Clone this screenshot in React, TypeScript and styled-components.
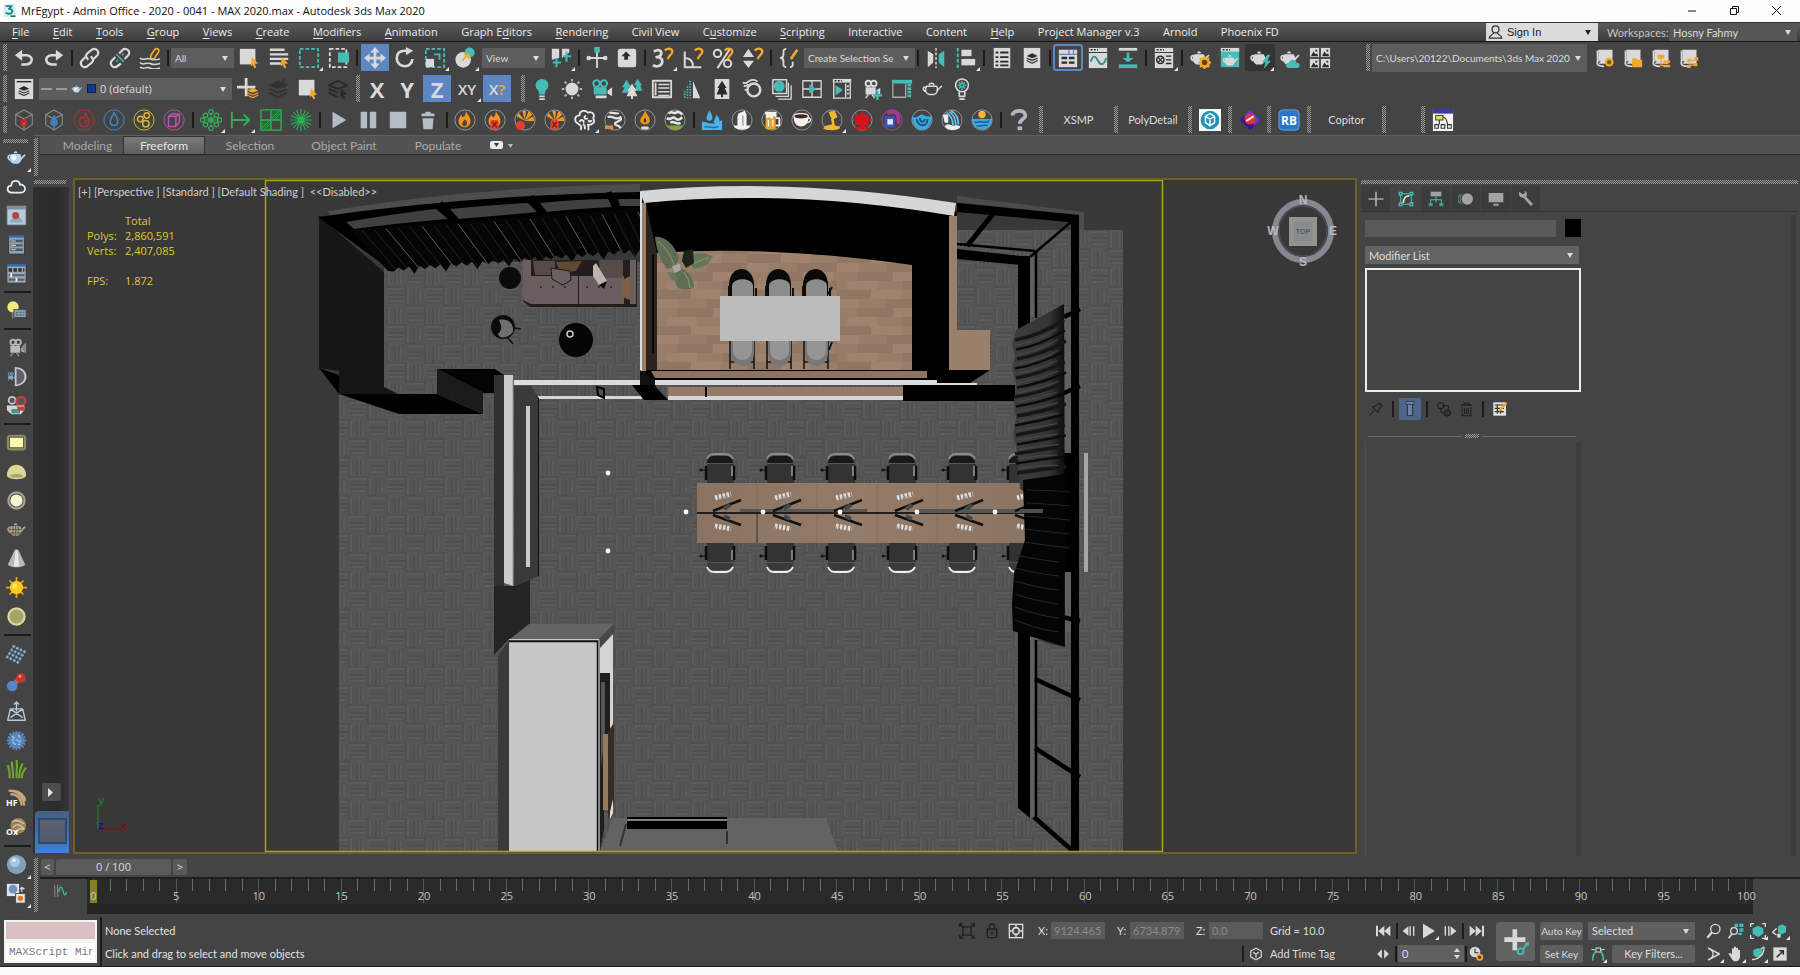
import React from "react";
import styled, { createGlobalStyle, css } from "styled-components";

const W = "#d9d9d9";
const T = "#45bdb6";
const Y = "#f2a92b";
const D = "#2b2b2b";
const UI = 'Lato, "Open Sans", sans-serif';

const Global = createGlobalStyle`
  *, *::before, *::after { box-sizing: border-box; }
  html, body, #root { height: 100%; }
  body { margin: 0; background: #444444; overflow: hidden; }
  body, button, input, select {
    font-family: "Open Sans", "Noto Sans", sans-serif;
    font-size: 11px;
    color: #dcdcdc;
  }
  button { border: 0; padding: 0; background: none; }
`;

/* ---------- drawing helpers ---------- */

const F = ({ d, c = W }: { d: string; c?: string }) => <path d={d} fill={c} />;
const S = ({ d, c = W, w = 2, dash }: { d: string; c?: string; w?: number; dash?: string }) => (
  <path d={d} fill="none" stroke={c} strokeWidth={w} strokeDasharray={dash} strokeLinejoin="round" />
);
const C = ({ x, y, r, c = W, s, w = 1 }: { x: number; y: number; r: number; c?: string; s?: string; w?: number }) => (
  <circle cx={x} cy={y} r={r} fill={c} stroke={s} strokeWidth={w} />
);
const Ring = ({ c = "#9a9a9a" }: { c?: string }) => <C x={12} y={12} r={11} c="none" s={c} w={1} />;

const cursor = <F d="M15 11l7 7-4 .3 2 4-2 1-2-4-2 2z" c={Y} />;
const magnet = <S d="M14 4c3-4 9-2 8 2-.5 2-3 3-5 7" c={Y} w={2.4} />;
const layers = (c: string) => (
  <>
    <F d="M2 8l10-5 10 5-10 4z" c={c} />
    <S d="M2 12l10 4 10-4M2 16l10 5 10-5" c={c} w={2} />
  </>
);
const teapot = (c: string) => (
  <>
    <F d="M6 8h10c3 4 2 9-2 11H8c-4-2-5-7-2-11zM9 7c0-3 4-3 4 0z" c={c} />
    <S d="M6 10c-4-2-5 3-1 5M16 15c2-1 3-5 6-6" c={c} w={2} />
  </>
);
const flame = (a: string, b: string) => (
  <>
    <F d="M13 2c1 4 5 6 5 11 0 4-3 7-6 7s-7-2-7-7c0-3 2-5 3-7 1 2 1 3 2 3 2-1 3-4 3-7z" c={a} />
    <F d="M12 11c1 2 3 3 2 6-1 3-5 2-5-1 0-2 2-3 3-5z" c={b} />
  </>
);
const burst = (
  <F d="M12 13L9 2h4zM12 13l4-11 4 4zM12 13l9-5 1 5zM12 13L3 8l2-4z" c="#f39a1e" />
);
const redX = (
  <>
    <rect x="7" y="12" width="9" height="10" rx="2" fill="#e2402e" />
    <S d="M9 14l5 6M14 14l-5 6" c="#7e1c12" w={1.4} />
  </>
);
const cube = (c: string) => <S d="M12 1l9 5v11l-9 6-9-6V6zM3 6l9 5 9-5M12 11v12" c={c} w={1.2} />;
const movie = (a: string, b: string) => (
  <>
    <C x={8} y={6} r={3} c="none" s={a} w={2} />
    <C x={14} y={6} r={3} c="none" s={a} w={2} />
    <F d="M5 10h11v8H5zM17 13l4-2v7l-4-2z" c={a} />
    <S d="M8 18l-3 4M12 18l3 4" c={b} w={1.5} />
  </>
);
const page = (inner: React.ReactNode) => (
  <>
    <rect x="3" y="1" width="18" height="22" fill={W} />
    {inner}
  </>
);
const winTop = (
  <>
    <rect x="2" y="1" width="20" height="4" fill={W} />
    <S d="M4 3h8" c={D} w={1.6} dash="2 1.5" />
  </>
);

const icons: Record<string, React.ReactNode> = {
  undo: (<><S d="M6 9h9c8 1 7 10-2 10H9" w={2.8} /><F d="M2 9l8-6v12z" /></>),
  redo: (<><S d="M18 9H9c-8 1-7 10 2 10h4" w={2.8} /><F d="M22 9l-8-6v12z" /></>),
  link: (<><S d="M10 14l-2-3c-1-2 0-3 1-4l5-4c4-3 9 2 6 6l-4 4" w={2.4} /><S d="M13 10l2 3c1 2 0 3-1 4l-5 4c-4 3-9-2-6-6l4-4" w={2.4} /></>),
  unlink: (<><S d="M11 7l4-4c4-3 9 2 6 6l-4 4M13 18l-4 3c-4 3-9-2-6-6l4-4" w={2.4} /><S d="M8 8l8 8M8 16l2-2M14 9l2-2" c={T} w={1.6} /></>),
  bind: (<><S d="M1 12c4 4 7-1 11 1s7 1 11 0M1 17c4 4 7-1 11 1s7 1 11 0M1 22c4 3 7-1 11 1s7 1 11 0" w={1.6} /><S d="M13 9l4-6c3-3 6 0 4 3l-4 6c-2 2-5 0-4-3z" c={Y} w={1.8} /></>),
  pick: (<><rect x="2" y="2" width="17" height="17" fill={W} />{cursor}</>),
  byName: (<><S d="M2 3h16M2 8h20M2 13h20M2 18h12" w={2.6} />{cursor}</>),
  region: <S d="M2 2h20v20H2z" c={T} w={2} dash="4 2.2" />,
  crossing: (<><S d="M2 2h18v20H2z" w={2} dash="4 2.2" /><rect x="11" y="6" width="12" height="11" fill={T} /></>),
  move: (<><S d="M12 3v18M3 12h18" w={3} /><F d="M12 0l5 6H7zM12 24l-5-6h10zM0 12l6-5v10zM24 12l-6-5v10z" /></>),
  rotate: (<><S d="M20 13c0 5-4 8-8 8s-9-3-9-9 4-8 9-8h2" w={2.8} /><F d="M13 0l8 4-8 5z" /></>),
  scale: (<><S d="M2 2h20v20H2z" c={T} w={2} dash="4 2.2" /><rect x="2" y="13" width="9" height="9" fill={W} /><S d="M11 8h6v6" c={T} w={2} /></>),
  place: (<><C x={10} y={14} r={8.5} /><C x={17} y={6} r={5.5} c={T} /><S d="M9 15l7-8M11 8h5v5" c={Y} w={2} /></>),
  pivot: (<><F d="M2 2h8v10l-8 2zM13 2h8v4l-8 6z" /><S d="M7 12v10M3 17h9M18 5v11M14 10h9" c={T} w={2.2} /></>),
  manip: (<><S d="M12 3v20M2 12h20" w={2} /><rect x="9" y="0" width="6" height="6" fill={T} /><C x={3} y={12} r={2.5} /><C x={21} y={12} r={2.5} /></>),
  keyb: (<><rect x="2" y="2" width="20" height="20" rx="2.5" fill={W} /><F d="M11 5l5 5h-3v4H9v-4H6z" c={D} /></>),
  snap3: (<><S d="M2 5c5-3 9-1 8 3-1 2-3 3-5 3 4 0 7 2 6 6-1 4-6 5-10 3" w={3} />{magnet}</>),
  angle: (<><S d="M3 5v17h18M3 12c6 0 9 4 9 10" w={2.2} />{magnet}</>),
  percent: (<><C x={6} y={7} r={4} c="none" s={W} w={2.2} /><C x={17} y={18} r={4} c="none" s={W} w={2.2} /><S d="M19 3L6 23" w={2.2} />{magnet}</>),
  spinner: (<><F d="M7 2l6 9H1zM7 23l-6-8h12z" />{magnet}</>),
  named: (<><S d="M9 2c-4 0-3 4-3 6s-1 4-3 4c2 0 3 2 3 4s-1 6 3 6M13 22c4 0 3-4 3-6" w={2} /><S d="M14 13l7-10" c={Y} w={3} /></>),
  mirror: (<><F d="M3 4l6 4v9l-6 5z" /><S d="M12 1v22" dash="3 2" w={1.6} /><F d="M21 4l-6 4v9l6 5z" c={T} /></>),
  align: (<><S d="M3 1v22" c={T} w={2} dash="4 2" /><rect x="7" y="3" width="11" height="7" fill={W} /><rect x="7" y="13" width="15" height="7" fill={W} /></>),
  sheet: page(<S d="M5 6h3M10 6h9M5 11h3M10 11h9M5 16h3M10 16h9M5 20h3M10 20h9" c={D} w={2} />),
  layerSheet: page(<g transform="translate(5 5) scale(.6)">{layers(D)}</g>),
  ribbon: (<><rect x="2" y="3" width="20" height="19" fill={W} /><S d="M13 3v5M18 3v4M2 8h20" c="#5b84c4" w={1.4} /><S d="M5 12h6M13 12h6M5 17h6M13 17h6" c={D} w={2.6} /></>),
  curve: (<><rect x="2" y="1" width="20" height="22" fill={W} /><S d="M2 6h20" c={D} w={1} /><S d="M4 3h8" c={D} w={1.6} dash="2 1.5" /><S d="M4 16c3-9 6-5 8-1s6 7 9-3" c="#2b8f8a" w={2} /></>),
  schematic: (<><rect x="2" y="1" width="20" height="3" fill={W} /><S d="M12 6v8" c={T} w={3} /><F d="M6 12h12l-6 5z" c={T} /><rect x="2" y="19" width="20" height="4" fill={T} /></>),
  material: (<><rect x="2" y="1" width="20" height="22" fill={W} /><S d="M2 6h20" c={D} w={1} /><S d="M4 3h8" c={D} w={1.6} dash="2 1.5" /><C x={8} y={14} r={4} c="none" s={D} w={1.6} /><S d="M5 11l6 6M11 11l-6 6M14 10h6M14 14h6M14 18h6" c={D} w={1.4} /></>),
  renderSetup: (<>{teapot(W)}<C x={17} y={17} r={4.5} c="#5b4310" s={Y} w={3} /><S d="M17 10v3M17 21v3M10 17h3M21 17h3M12 12l2 2M20 20l2 2M22 12l-2 2M14 20l-2 2" c={Y} w={2} /></>),
  frameWin: (<><rect x="2" y="2" width="20" height="20" fill={T} />{winTop}<g transform="translate(3 5) scale(.8)">{teapot(W)}</g></>),
  renderProd: (<>{teapot(W)}<F d="M20 9l-6 8h4l-2 7 8-9h-4l3-6z" c={T} /></>),
  renderCloud: (<>{teapot(W)}<F d="M10 23c-4-1-2-6 1-6 1-4 7-4 8 0 4 0 5 6 1 6z" c={T} /></>),
  gallery: (<>{[1, 13].map((x) => [1, 13].map((y) => <g key={`${x}-${y}`}><rect x={x} y={y} width="10" height="10" fill={W} /><F d={`M${x + 1} ${y + 9}l3-5 2 3 2-1 1 3z`} c={D} /><rect x={x + 6} y={y + 2} width="2" height="2" fill={D} /></g>))}</>),
  projGear: (<><F d="M4 2h17v17H4l3-3H4z" /><S d="M3 3v14c-2 4 4 5 8 5" w={2} /><C x={17} y={17} r={4} c="#7a5a10" s={Y} w={2.6} /></>),
  projFolder: (<><F d="M4 2h17v17H4l3-3H4z" /><S d="M3 3v14c-2 4 4 5 8 5" w={2} /><F d="M11 12h5l1 2h6v9H11z" c={Y} /></>),
  projTree: (<><F d="M4 2h17v17H4l3-3H4z" /><S d="M3 3v14c-2 4 4 5 8 5" w={2} /><F d="M8 8h8v5H8zM15 15h8v3h-8zM15 20h8v3h-8z" c={Y} /><S d="M12 12v9h4" c={Y} w={1.6} /></>),
  projNet: (<><F d="M4 2h17v17H4l3-3H4z" /><S d="M3 3v14c-2 4 4 5 8 5" w={2} /><F d="M10 13h4v4h-4zM18 11h5v4h-5zM10 20h4v4h-4zM18 18h4v4h-4z" c={Y} /><S d="M12 15h8M12 21l8-1" c={Y} w={1.6} /></>),

  explorer: (<><rect x="2" y="1" width="20" height="22" fill={W} /><S d="M4 4h16" c={D} w={1.6} /><g transform="translate(5 7) scale(.58)">{layers(D)}</g></>),
  layerAdd: (<><S d="M10 0v20M0 10h20" w={3} /><g transform="translate(10 9) scale(.6)">{layers(Y)}</g></>),
  layerIn: (<g opacity=".7"><>{layers(D)}</><S d="M18 1v8M14 6l4 4 4-4" c={D} w={2} /></g>),
  layerPick: (<g opacity=".7"><S d="M2 8l10-5 10 5-10 4zM2 12l10 4M2 16l10 5" c="#1d1d1d" w={2} /><F d="M15 11l7 7-4 .3 2 4-2 1-2-4-2 2z" c="#1d1d1d" /></g>),
  bulb: (<><C x={12} y={8} r={7} c={T} /><F d="M8 13h8l-1 5H9z" c={T} /><S d="M9 20h6M9 23h6" w={1.8} /></>),
  sunL: (<><S d="M12 1v22M1 12h22M4 4l16 16M20 4L4 20" w={2} c="#bdbdbd" /><C x={12} y={12} r={8.5} c="#444" /><C x={12} y={12} r={7} /></>),
  camL: (<><C x={6} y={6} r={3.5} c="none" s={T} w={2.2} /><C x={14} y={6} r={3.5} c="none" s={T} w={2.2} /><F d="M3 10h14v8H3z" c={T} /><F d="M18 14l5-4v10l-5-3zM5 19h12v3H5z" /></>),
  trees: (<><F d="M6 2l5 8H8l3 6H1l3-6H1zM18 1l5 7h-2l2 6h-8l2-6h-3z" c={T} /><F d="M12 6l5 8h-2l3 6h-5v3h-2v-3H6l3-6H7z" /></>),
  list: (<><S d="M2 3h20v18H2z" w={2} /><S d="M5 5v14" w={2} c={W} /><S d="M8 7h12M8 11h12M8 15h12M8 19h12" w={1.6} /></>),
  halfTree: (<><F d="M13 3l8 19h-8z" /><S d="M10 3v19M7 9v13M4 14v8" c={T} w={1.8} dash="1.6 1.4" /></>),
  treePage: (<><rect x="4" y="1" width="16" height="22" rx="1" fill={W} /><F d="M12 3l5 8h-2l3 7h-5v3h-2v-3H6l3-7H7z" c={D} /></>),
  donut: (<><C x={14} y={13} r={7} c="none" s={W} w={2.6} /><S d="M2 5c2 1 4 1 6-1 2-2 7-3 10 0M3 9c2 0 3 0 5-2M4 13h4" w={2} /></>),
  sphereStack: (<><S d="M2 2h15v15H2z" w={1.6} /><S d="M19 5v15H5M22 8v15H8" w={1.4} /><C x={9} y={9} r={6} c={T} /></>),
  gridPlay: (<><S d="M2 3h20v18H2zM12 3v18M2 12h20" w={1.4} /><F d="M9 7l8 5-8 5z" c={T} /></>),
  winPlay: (<>{winTop}<S d="M3 5v17h18V5M16 6v15" w={1.5} /><F d="M5 8l8 5-8 6z" c={T} /><S d="M18.5 8v12" w={2} dash="2 2" /></>),
  camAdd: (<>{movie(W, W)}<S d="M18 14v10M13 19h10" c={T} w={2.4} /></>),
  winTeal: (<><rect x="1" y="2" width="22" height="4" fill={T} /><S d="M2 6v15h14V6" c="#a9a9a9" w={1.4} /><S d="M20 6v16" c={T} w={4} dash="3 1" /></>),
  potLine: (<><S d="M6 9h11c2 4 1 8-3 9H9c-4-1-5-5-3-9zM9 8c0-3 5-3 5 0" w={1.6} /><S d="M6 10c-4-1-5 3-1 5M17 14c2-1 3-4 6-5" w={1.6} /></>),
  bulbGear: (<><C x={12} y={8} r={7} c="none" s={W} w={1.6} /><S d="M12 3v10M7 8h10M8.500 4.500l7 7M15.500 4.500l-7 7" c={T} w={1.5} /><C x={12} y={8} r={2} c="#444" s={T} w={1.5} /><S d="M9 15v5h6v-5M9 23h6" w={1.8} /></>),

  cubeFire: (<>{cube("#8d8d8d")}<g transform="translate(5 7) scale(.6)">{flame("#b5302b", "#d2473c")}</g></>),
  cubeDrop: (<>{cube("#8d8d8d")}<F d="M12 6c3 5 5 7 4 10s-7 4-8 0c-1-3 2-5 4-10z" c="#3f7fc0" /></>),
  ringFire: (<><Ring c="#b5302b" /><g transform="translate(3 3) scale(.8)"><S d="M13 2c1 4 5 6 5 11 0 4-3 8-6 8s-7-3-7-8c0-3 2-5 3-7 1 2 1 3 2 3 2-1 3-4 3-7zM12 11c1 2 3 3 2 6" c="#b5302b" w={1.8} /></g></>),
  ringDrop: (<><Ring c="#3f87cf" /><S d="M12 4c3 5 5 7 4 11s-7 4-8 0c-1-4 2-6 4-11z" c="#3f87cf" w={1.6} /></>),
  ringBubbles: (<><Ring c="#d8b73a" /><C x={15} y={7} r={3} c="none" s="#d8b73a" w={1.6} /><C x={8} y={11} r={3} c="none" s="#d8b73a" w={1.6} /><C x={14} y={16} r={3.5} c="none" s="#d8b73a" w={1.6} /></>),
  ringCube: (<><Ring c="#c052b4" /><S d="M6 8l5-3 7 1v8l-4 5H6zM6 8h8v10M14 8l4-2" c="#c052b4" w={1.6} /></>),
  gNet: (<>{[[12, 3], [6, 7], [18, 7], [2.5, 12], [12, 12], [21.5, 12], [6, 17], [18, 17], [12, 21]].map(([x, y]) => <C key={`${x}${y}`} x={x} y={y} r={2.4} c="none" s="#2fb257" w={1.3} />)}<S d="M12 5v14M4 12h16M7 8l10 8M17 8L7 16" c="#2fb257" w={1} /></>),
  gArrow: <S d="M2 3v18M2 12h18M15 6l6 6-6 6" c="#2fb257" w={2} />,
  gChecker: (<><F d="M12 1h11v11H12zM1 12h11v11H1z" c="#1f7038" /><S d="M13 10l8-8M16 11l6-6M2 21l8-8M5 22l6-6" c="#2fb257" w={1} /><S d="M1 1h22v22H1zM12 1v22M1 12h22" c="#2fb257" w={1.4} /></>),
  gBurst: <S d="M12 0v24M0 12h24M3.500 3.500l17 17M20.500 3.500l-17 17M7 1l10 22M17 1L7 23M1 7l22 10M1 17L23 7" c="#2fb257" w={1.2} />,
  play: <F d="M6 3l15 9-15 9z" c="#b4bcc6" />,
  pause: <F d="M4 3h7v18H4zM14 3h7v18h-7z" c="#b4bcc6" />,
  stop: <rect x="3" y="3" width="18" height="18" fill="#b4bcc6" />,
  trash: <F d="M5 5h4V3h6v2h4v3H5zM6 10h12l-1 12H7z" c="#b4bcc6" />,
  fire: (<><Ring />{flame("#f6921e", "#494949")}</>),
  fireX: (<><Ring />{flame("#f6921e", "#e8a040")}{redX}</>),
  blast: (<><Ring />{burst}<C x={7} y={18} r={5} c="#e2402e" /></>),
  blastX: (<><Ring />{burst}{redX}</>),
  smoke: (<S d="M7 23c3-5-2-6-5-9-2-5 1-7 4-7 0-6 7-6 9-3 5-2 8 2 6 6 3 5-2 8-6 7 1 3 2 5 0 6M6 14c2-4 6-1 4 1M13 7c-3 2-1 5 2 3M16 12c0 3 3 2 3 0M12 22c0-3 0-4-2-6" c="#e9e9e9" w={2} />),
  cigar: (<><Ring /><S d="M6 5c3-3 7 2 10-1M4 9c5-3 8 4 14 0 3 5-6 4-6 7s5 1 6 5" c="#e6e6e6" w={2.4} /><rect x="1" y="18" width="9" height="4" fill="#d68d4c" /></>),
  candle: (<><Ring /><F d="M12 2c3 5 6 8 5 12s-9 4-10 0c-1-4 3-6 5-12z" c="#f6921e" /><F d="M12 9c2 3 2 5 0 6-2-1-2-3 0-6z" c="#3c3c3c" /><rect x="8" y="19" width="8" height="3" rx="1" fill="#ddd" /></>),
  swamp: (<><Ring /><S d="M5 5c4-4 5 1 8-1s5 0 7 2M3 10c5 3 6-3 9 0s5 2 8-1M7 15c4-3 6 3 11 0" c="#e6e6e6" w={2.8} /><F d="M3 18h18c-3 7-15 7-18 0z" c="#7ba63b" /></>),
  splash: (<><F d="M9 1c3 5 4 7 3 10s-6 2-6-1 2-5 3-9zM17 6c2 3 4 5 3 8s-6 2-6 0 2-4 3-8z" c="#49b3ee" /><F d="M1 14c6-1 9 6 22-2v11H1z" c="#49b3ee" /><S d="M4 20c5-3 8 3 15-1" c="#1b6ea5" w={1.6} /></>),
  milk: (<><Ring /><F d="M8 5l7-3 2 4v13H7V9z" c="#f1f1f1" /><F d="M3 18h18c0 6-18 6-18 0z" c="#f1f1f1" /><S d="M13 7v11" c="#8a8a8a" w={1.2} /></>),
  beer: (<><Ring /><rect x="5" y="8" width="11" height="14" fill="#e9a32a" /><F d="M4 3h13v6l-3-1-2 3-3-2-3 1z" c="#f4f1e6" /><S d="M16 10h4v8h-4" c="#efefef" w={2} /><S d="M8 12v7M13 12v7" c="#fff" w={1.2} /></>),
  coffee: (<><Ring /><F d="M3 9h16c0 6-3 10-8 10S3 15 3 9z" c="#f2f2f2" /><ellipse cx="11" cy="8" rx="8" ry="3" fill="#4b241c" stroke="#f2f2f2" strokeWidth="1.4" /><S d="M18 10c5-1 4 5-2 5" c="#f2f2f2" w={1.6} /></>),
  honey: (<><Ring /><F d="M8 3l7-1 3 7-6 3z" c="#f1b434" /><F d="M11 11h3l1 7c9 1 7 5-3 5S0 21 6 18l6-1z" c="#f1b434" /></>),
  splat: (<><Ring /><F d="M12 2l2 5 5-3-1 5 5 3-5 2 2 5-5-1v4h-6l1-5-6 1 2-4-5-3 5-1-2-6 6 3z" c="#d4141a" /><S d="M5 21h14" c="#d4141a" w={3} /></>),
  paint: (<><Ring c="#b0479b" /><S d="M7 5c6-4 12-1 12 5v6" c="#a83792" w={4} /><rect x="4" y="8" width="11" height="12" rx="1" fill="#3b55c4" /><F d="M7 11h6v6H7z" c="#e4e9f7" /></>),
  whirl: (<><Ring /><F d="M1 8c6 4 8-3 11-2s6 4 11 1c0 20-21 22-22 1z" c="#3aa9e0" /><S d="M6 11c2 9 12 9 12 0M10 10c-1 5 5 5 5 1" c="#12517c" w={2} /></>),
  falls: (<><Ring /><S d="M9 3c5 3 7 8 7 15M6 4c5 3 7 8 7 14M11 2c6 3 8 9 8 15" c="#6cc4ee" w={1.8} /><F d="M4 19c2-4 6-2 8-1s7-2 9 2c-3 4-14 4-17-1zM2 6h6v9H4z" c="#eeeeee" /></>),
  ocean: (<><Ring /><C x={12} y={6} r={4} c="#f1b434" /><F d="M1 11h22c0 15-22 15-22 0z" c="#3aa9e0" /><S d="M4 14c3 2 5-1 8 0s5 1 8-1M6 18c3 2 6-1 12 0" c="#155f90" w={1.6} /></>),
  help: (<><S d="M5 7c0-6 14-7 14 0 0 4-6 4-6 9" c="#b3b7c4" w={4.2} /><rect x="10.500" y="19" width="5" height="4" fill="#b3b7c4" /></>),
  xsCube: (<><rect x="0" y="0" width="24" height="24" fill="#f3f9fb" /><C x={12} y={12} r={8.5} c="#2295b4" s="#2295b4" w={3.4} /><S d="M12 12v7M7 8l5 3 5-3M7 8v7l5 3 5-3V8l-5-3z" c="#f3f9fb" w={1.6} /></>),
  diamond: (<><F d="M12 1l11 11-11 11L1 12z" c="#3a1694" /><F d="M12 1l11 11-6 6L6 7z" c="#6b35d8" /><C x={12} y={11} r={6} c="#e03535" /><S d="M8 13l8-5" c="#fff" w={2} /></>),
  rb: (<><rect x="1" y="1" width="22" height="22" rx="4" fill="#2a74c9" stroke="#68a7e8" /><text x="12" y="17" textAnchor="middle" fontSize="13" fontWeight="700" fill="#fff" fontFamily="Open Sans, sans-serif">RB</text></>),
  flow: (<><rect x="1" y="0" width="22" height="24" fill="#f3f3f3" /><rect x="1" y="0" width="22" height="5" fill="#3c3aa0" /><rect x="4" y="7" width="8" height="5" fill="#ecd94a" stroke="#333" /><S d="M8 12v5M12 9c4 0 4 4 5 8M3 17h4v4H3zM10 17h4v4h-4zM17 17h4v4h-4z" c="#333" w={1.2} /></>),

  potBlue: (<g>{teapot("#b9d2ea")}<C x={9} y={12} r={3} c="#eef6fd" /></g>),
  cloud: <S d="M6 19c-6-1-5-8 0-8 0-7 9-7 10-1 7-1 8 9 1 9z" c="#e3edf5" w={2} />,
  vfb: (<><rect x="1" y="1" width="22" height="22" fill="#b3cbe0" stroke="#555" /><rect x="1" y="1" width="22" height="4" fill="#8a8a90" /><F d="M4 20l4-6h8l4 6z" c="#8fa9bf" /><C x={11} y={12} r={4} c="#b1463c" /></>),
  uiList: (<><rect x="3" y="1" width="18" height="22" fill="#8fa0b0" stroke="#333" /><rect x="3" y="1" width="18" height="3" fill="#3567a5" /><S d="M5 8h14M5 13h14M5 18h14" c="#4c5864" w={2.6} /><S d="M6 8h5M6 13h5M6 18h5" c="#cfd8e0" w={1.4} /></>),
  uiGrid: (<><rect x="1" y="1" width="22" height="22" fill="#9aa7b3" stroke="#333" /><rect x="1" y="1" width="22" height="3" fill="#3567a5" /><S d="M3 8h18" c="#333" w={4} dash="4 1.500" /><S d="M3 14h18M3 19h18" c="#58626c" w={2.4} /><S d="M6 12v4M12 17v4" c="#fff" w={2} /></>),
  lamp: (<><C x={8} y={8} r={6.5} c="#f5ea79" /><F d="M6 14h5l-1 7H7z" c="#777" /><rect x="9" y="11" width="14" height="9" fill="#8ba3b8" stroke="#444" /><S d="M11 14h10M11 17h10" c="#4b6076" w={1.4} dash="3 1" /></>),
  movie1: (<>{movie("#bdb9bb", "#8f8b8d")}<F d="M23 6v13l-5-5v-3z" c="#8a8a8a" /></>),
  dome: (<><F d="M10 1c18 0 18 22 0 22z" c="#c4c8cc" /><F d="M12 3c12 1 12 17 0 18z" c="#5e6266" /><g transform="translate(0 6) scale(.5)">{movie("#7fa7cc", "#7fa7cc")}</g></>),
  movieRed: (<><C x={7} y={6} r={4} c="#555" s="#ccc" w={2} /><C x={17} y={7} r={5} c="#555" s="#c63f45" w={2.4} /><F d="M1 12h20v5l-4 5H6l-5-5z" c="#d8d4d4" /><F d="M6 16h10v5H6z" c="#3c9b96" /><F d="M12 13h9v5h-7z" c="#c63f45" /></>),
  lRect: (<><rect x="1" y="3" width="22" height="18" rx="4" fill="#8c8967" /><rect x="4" y="6" width="16" height="12" fill="#fdf6ae" stroke="#55522f" /></>),
  lDome: (<><F d="M1 17c0-17 22-17 22 0-4 5-18 5-22 0z" c="#dcd794" /><F d="M4 17c3-3 13-3 16 0-4 3-12 3-16 0z" c="#aba768" /></>),
  lSphere: (<><C x={12} y={12} r={10.5} c="#a6a491" /><C x={12} y={12} r={8} c="#4b4b45" /><C x={12} y={12} r={7} c="#f6f3cf" /></>),
  lMesh: (<>{teapot("#a8a384")}<S d="M8 8v11M11 8v12M14 8v11M4 12h14M5 16h12" c="#5b583f" w={1} /></>),
  lCone: (<><F d="M10 2h4l8 17c-5 4-15 4-20 0z" c="#b8b8b8" /><F d="M11 2h2l2 19H9z" c="#e8e8e8" /></>),
  sun: (<><S d="M12 0v24M0 12h24M4 4l16 16M20 4L4 20" c="#e6a913" w={2} /><C x={12} y={12} r={7.5} c="#fbc91c" /><C x={10} y={10} r={3} c="#fde465" /></>),
  disc: (<><C x={12} y={12} r={10.5} c="#dcd89d" /><C x={12} y={12} r={8} c="#a8a36a" /></>),
  dots: (<>{[0, 1, 2, 3].map((i) => [0, 1, 2, 3].map((j) => <C key={`${i}${j}`} x={9 + i * 4 - j * 2.5} y={4 + i * 2 + j * 4} r={1.9} c="#8fb0cc" s="#394a58" w={0.6} />))}</>),
  balls: (<><S d="M8 15l8-8" c="#b06a80" w={5} /><C x={7} y={16} r={6} c="#5288c8" /><C x={17} y={7} r={5.5} c="#c8372f" /><C x={16} y={5} r={1.5} c="#ee9a92" /></>),
  pyramid: (<S d="M12 1v11M9 4l3-3 3 3M5 9l-3 13h20L19 9zM5 9l14 10M19 9L5 19" c="#b3cbdc" w={1.6} />),
  furball: (<><S d="M12 1v22M1 12h22M4 4l16 16M20 4L4 20M8 2l8 20M16 2L8 22M2 8l20 8M2 16l20-8" c="#5a87bd" w={2.4} /><C x={12} y={12} r={8.5} c="#5a87bd" /><S d="M7 7l3 3M14 6l2 3M17 12l-3 2M8 14l3 3M12 11l2 1M7 11l2 1M14 17l2-1" c="#a3c3e6" w={1.6} /></>),
  grass: <S d="M4 22C5 15 3 10 2 7M8 22C9 14 6 8 7 3M12 22C12 12 13 6 12 1M15 22c0-8 2-13 4-17M18 22c0-5 2-9 5-12" c="#6ea82c" w={2.4} />,
  hair: (<><S d="M3 3c9 0 16 5 18 17M5 7c7 0 12 4 13 13M8 3c7 1 13 5 14 12" c="#c7a77b" w={2.4} /><text x="0" y="21" fontSize="10" fontWeight="700" fill="#fff" fontFamily="Open Sans, sans-serif">HF</text></>),
  ox: (<><C x={14} y={10} r={9} c="#9c8260" /><S d="M7 6c5-5 11 0 14 2M8 12c4-6 9-3 13 2M12 18c1-5 5-5 8-4" c="#d6c29c" w={1.6} /><text x="0" y="21" fontSize="10" fontWeight="700" fill="#fff" fontFamily="Open Sans, sans-serif">Ox</text></>),
  glass: (<><C x={12} y={12} r={11} c="#7fa1bd" /><C x={10} y={9} r={6} c="#a9c5d9" /><C x={9} y={7} r={2} c="#eaf4fa" /></>),
  convert: (<><rect x="1" y="1" width="14" height="14" fill="#dfe6ee" /><C x={8} y={7} r={5} c="#6f94c0" /><rect x="11" y="12" width="11" height="11" fill="#e8e0d6" stroke="#444" /><C x={16.5} y={17.5} r={3} c="#d87533" /><S d="M18 10V5M16 7l2-2 3 2" w={1.5} /></>),
  redDash: <S d="M2 7V4h20v3" c="#b53a3a" w={2} dash="4 1.500" />,

  plus: <S d="M12 1v22M1 12h22" w={2.6} c="#a8a8a8" />,
  modify: (<><S d="M4 4h16v16H4z" c={T} w={1.6} /><F d="M1 1h6v6H1zM17 1h6v6h-6zM1 17h6v6H1zM17 17h6v6h-6z" c={T} /><F d="M3 3h2v2H3zM19 3h2v2h-2zM3 19h2v2H3zM19 19h2v2h-2z" c="#444" /><S d="M8 18c0-7 4-11 9-11" c="#eee" w={2.2} /></>),
  hierarchy: (<><rect x="4" y="1" width="16" height="7" fill="#a3a3a3" /><S d="M12 8v5M4 19v-6h16v6M12 13v4" c={T} w={1.6} /><F d="M1 18h6v5H1zM17 18h6v5h-6z" c="#3d9a95" /></>),
  motion: (<><C x={14} y={12} r={8.5} c="#a3a3a3" /><S d="M7 4c-5 4-5 12 0 16M3 5c-4 4-4 10 0 14" c="#4d8785" w={1.6} /></>),
  display: <F d="M1 3h22v14H1zM8 19h8v3H8z" c="#a3a3a3" />,
  wrench: (<><S d="M9 8l12 13" c="#a3a3a3" w={4.2} /><F d="M2 1l5 4 4-2-2-3c6 1 6 9 0 10C3 11 0 6 2 1z" c="#a3a3a3" /></>),
  pin: (<S d="M2 22l7-8M7 9l8 8 1-4 5-6-4-4-6 5z" c="#222" w={1.6} />),
  tube: (<><rect x="8" y="4" width="8" height="18" fill="#6d83a3" stroke="#1f2c40" strokeWidth="1.400" /><rect x="6" y="1" width="12" height="4" fill="#6d83a3" stroke="#1f2c40" /></>),
  unique: (<><C x={7} y={7} r={4.5} c="none" s="#1d1d1d" w={1.6} /><C x={17} y={18} r={4.5} c="#333" s="#1d1d1d" w={1.6} /><S d="M12 7h7v5M7 12c0 6 2 6 5 6" c="#1d1d1d" w={1.6} /></>),
  bin: (<S d="M3 5h18M8 5V2h8v3M5 8v14h14V8M9 10v9M12 10v9M15 10v9" c="#1f1f1f" w={1.7} />),
  config: (<><rect x="2" y="2" width="19" height="20" fill="#e3e3e3" /><S d="M4 6h14M4 11h14M4 16h14M8 5v14M13 10v9" c="#333" w={1.8} /><S d="M10 15L22 3" c={Y} w={3.5} /></>),
  isolate: (<><rect x="6" y="6" width="12" height="12" fill="none" stroke="#1c1c1c" strokeWidth="1.800" /><S d="M1 6V1h5M18 1h5v5M23 18v5h-5M6 23H1v-5M6 6L2 2M18 6l4-4M18 18l4 4M6 18l-4 4" c="#1c1c1c" w={1.6} /></>),
  lock: (<><rect x="5" y="9" width="14" height="13" rx="2" fill="none" stroke="#1c1c1c" strokeWidth="2" /><S d="M8 9V5c0-5 8-5 8 0v4M12 13v5" c="#1c1c1c" w={2} /></>),
  absMode: (<><rect x="2" y="2" width="20" height="20" fill="none" stroke={W} strokeWidth="2" /><C x={12} y={12} r={5} c="none" s={W} w={2.4} /><S d="M12 3v5M12 16v5M3 12h5M16 12h5" w={2} /></>),
  tag: (<S d="M12 2l9 5v10l-9 5-9-5V7zM7 9l5 3 5-3M12 12v6" w={2} />),
  toStart: (<><S d="M3 4v16" w={3} /><F d="M14 4v16L5 12zM23 4v16l-9-8z" /></>),
  prev: (<><F d="M11 4v16L1 12z" /><S d="M14 4v16M20 4v16" w={2.4} /></>),
  next: (<><F d="M13 4v16l10-8z" /><S d="M4 4v16M10 4v16" w={2.4} /></>),
  toEnd: (<><S d="M21 4v16" w={3} /><F d="M1 4v16l9-8zM10 4v16l9-8z" /></>),
  playBig: <F d="M3 1l18 11L3 23z" />,
  keyMode: <F d="M10 4v16L2 12zM14 4v16l8-8z" />,
  clock: (<><C x={9} y={9} r={8} /><S d="M9 4v6h5" c={D} w={1.6} /><C x={16} y={17} r={4} c="#5b4310" s={Y} w={2.6} /></>),
  bigKey: (<><S d="M11 1v18M2 10h18" w={4} /><C x={16} y={20} r={2.5} c="none" s={T} w={1.6} /><S d="M18 18l5-6M20 13l3 2" c={T} w={1.6} /></>),
  tangent: (<><rect x="9" y="3" width="7" height="6" fill="none" stroke={W} strokeWidth="1.500" /><S d="M2 5l6 1M16 6l6-1" w={1.5} /><S d="M9 8c-5 4-5 9-5 14M16 8c4 4 4 9 4 14" c={T} w={2.4} /></>),
  zoom: (<><C x={14} y={9} r={7} c="none" s={W} w={2} /><S d="M9 14l-7 8" w={3.4} /></>),
  zoomAll: (<><F d="M10 1h5v5h-5zM17 1h6v5h-6zM17 8h6v5h-6zM15 15h6v3h-6z" c={T} /><C x={9} y={12} r={5} c="#444" s={W} w={2} /><S d="M6 16l-5 7" w={2.6} /></>),
  extents: (<><S d="M1 6V1h5M18 1h5v5M23 18v5h-5M6 23H1v-5" w={2} /><F d="M12 4l8 4v8l-8 5-8-5V8z" c={T} /></>),
  extAll: (<><F d="M15 2l6 3v9l-6 3-6-3V5z" c={T} /><S d="M7 8l-6 6 6 4" w={2} /><F d="M8 16h5v6H8z" /></>),
  fov: (<><S d="M3 3l17 9-17 9" w={2.2} /><S d="M7 5c5 4 5 10 0 14" w={2} /></>),
  hand: <F d="M6 11V5c0-2 3-2 3 0v-2c0-3 3-3 3 0v1c0-2 3-2 3 0v3c0-2 3-2 3 0v9c0 4-3 7-6 7s-5-1-7-5l-4-6c0-2 3-2 5 1z" />,
  orbit: (<><F d="M12 3l7 3v8l-7 4-7-4V6z" c={T} /><S d="M3 20C12 22 22 12 21 2M16 5l5-4" w={2} /></>),
  maxi: (<><rect x="2" y="2" width="20" height="20" fill={W} /><S d="M7 17L17 7M11 7h6v6" c={D} w={2.2} /></>),
  miniCurve: (<><S d="M3 2v20" c="#c99" w={2} dash="2 1.500" /><S d="M8 2v20" c="#ddd" w={1.5} dash="2 1.500" /><S d="M10 14c2-14 5-10 7-2s4 9 6 2" c={T} w={2} /></>),
  user: (<><C x={12} y={7} r={5.5} c="none" s="#333" w={2} /><S d="M9 12c1 4-7 3-7 9h20c0-6-8-5-7-9" c="#333" w={2} /></>),
  logo: (<><rect x="1" y="0" width="22" height="24" rx="2" fill="#d7efee" /><S d="M5 4h11l-5 5c9 0 8 10-1 9-3 0-4-1-5-2" c="#168a8a" w={3.4} /><rect x="14" y="21" width="9" height="3" fill="#17697a" /></>),
};

const Svg = styled.svg<{ $s: number }>`
  width: ${(p) => p.$s}px;
  height: ${(p) => p.$s}px;
  display: block;
  flex: none;
`;
const Icon = ({ n, s = 22 }: { n: string; s?: number }) => (
  <Svg $s={s} viewBox="0 0 24 24" aria-hidden="true">{icons[n]}</Svg>
);

/* ---------- shared parts ---------- */

const dotted = css`
  background: repeating-conic-gradient(#9a9a9a 0 25%, #444444 0 50%) 0 0 / 2px 2px;
`;
const Grip = styled.div<{ $before?: number; $after?: number }>`
  ${dotted}
  flex: none;
  width: 4px;
  align-self: stretch;
  margin: 2px ${(p) => p.$after ?? 2}px 2px ${(p) => p.$before ?? 3}px;
`;
const HGrip = styled.div`
  ${dotted}
  flex: none;
  height: 4px;
`;
const Sep = styled.div<{ $w?: number }>`
  flex: none;
  width: ${(p) => p.$w ?? 6}px;
  height: 16px;
  background: linear-gradient(#1b1b1b, #1b1b1b) center / 2px 100% no-repeat;
`;
const ToolButton = styled.button<{ $on?: boolean; $framed?: boolean; $dark?: boolean; $fly?: boolean; $w?: number; $h?: number }>`
  position: relative;
  flex: none;
  width: ${(p) => p.$w ?? 30}px;
  height: ${(p) => p.$h ?? 27}px;
  display: grid;
  place-items: center;
  ${(p) => p.$on && css`
    background: linear-gradient(#5d86c3, #5d86c3) center / 28px 100% no-repeat;
  `}
  ${(p) => p.$dark && css`
    background: #343434;
  `}
  ${(p) => p.$framed && css`
    border: 2px solid #5d86c3;
    border-radius: 3px;
  `}
  ${(p) => p.$fly && css`
    &::after {
      content: "";
      position: absolute;
      right: 1px;
      bottom: 0;
      border-left: 4px solid transparent;
      border-bottom: 4px solid #e8e8e8;
    }
  `}
`;
const Letter = styled.span<{ $small?: boolean }>`
  font: ${(p) => (p.$small ? "600 15px" : "700 22px")} "Open Sans", sans-serif;
  color: #d9d9d9;
  line-height: 24px;
  em { font-style: normal; color: #f2a92b; }
`;
const Drop = styled.div<{ $w: number; $h: number; $bg?: string }>`
  position: relative;
  flex: none;
  width: ${(p) => p.$w}px;
  height: ${(p) => p.$h}px;
  background: ${(p) => p.$bg ?? "#5d5d5d"};
  display: flex;
  align-items: center;
  &::after {
    content: "";
    position: absolute;
    right: 6px;
    top: calc(50% - 2px);
    border: 3px solid transparent;
    border-top: 5px solid #dcdcdc;
    border-bottom: 0;
    pointer-events: none;
  }
`;
const Select = styled.select<{ $tight?: boolean }>`
  appearance: none;
  width: 100%;
  height: 100%;
  border: 0;
  background: none;
  padding: 0 14px 0 4px;
  font: ${(p) => (p.$tight ? 10 : 11)}px ${UI};
  color: #dcdcdc;
  border-radius: 0;
`;

const Dropdown = ({ label, w, h, bg, tight }: { label: string; w: number; h: number; bg?: string; tight?: boolean }) => (
  <Drop $w={w} $h={h} $bg={bg}>
    <Select aria-label={label} defaultValue={label} $tight={tight}>
      <option>{label}</option>
    </Select>
  </Drop>
);

/* ---------- title bar and menu ---------- */

const Frame = styled.div`
  display: flex;
  flex-direction: column;
  height: 100vh;
  min-height: 700px;
  background: #444444;
  border-bottom: 8px solid #fbfbfb;
  overflow: hidden;
`;
const TitleBar = styled.header`
  flex: none;
  height: 22px;
  background: #fdfdfd;
  color: #111;
  display: flex;
  align-items: center;
  padding: 0 11px 2px 3px;
  gap: 5px;
`;
const TitleText = styled.h1`
  margin: 0;
  flex: 1;
  font-size: 11px;
  font-weight: 400;
  white-space: nowrap;
`;
const WinButton = styled.button`
  width: 26px;
  height: 18px;
  margin-left: 11px;
  display: grid;
  place-items: center;
`;
const MenuBar = styled.nav`
  flex: none;
  height: 20px;
  display: flex;
  align-items: stretch;
  background: linear-gradient(#5a5a5a, #3d3d3d);
  border-top: 1px solid #333;
  border-bottom: 1px solid #161616;
`;
const MenuList = styled.div`
  flex: 0 1 1291px;
  padding: 0 12px;
  display: flex;
  justify-content: space-between;
`;
const MenuItem = styled.button`
  padding: 0 0 2px;
  white-space: nowrap;
  color: #ececec;
  u { text-underline-offset: 2px; }
`;
const Spacer = styled.div`
  flex: 1;
`;
const SignIn = styled.button`
  width: 112px;
  background: #dcdcdc;
  color: #1c1c1c;
  display: flex;
  align-items: center;
  gap: 4px;
  padding: 0 7px 0 2px;
  font: 11px "Liberation Sans", sans-serif;
  &::after {
    content: "";
    margin-left: auto;
    border: 3px solid transparent;
    border-top: 5px solid #1c1c1c;
    border-bottom: 0;
  }
`;
const WorkspaceLabel = styled.span`
  align-self: center;
  padding: 0 4px 0 9px;
  width: 71px;
  font: 11px ${UI};
  color: #c4c4c4;
`;

const menus: [string, string, string][] = [
  ["", "F", "ile"], ["", "E", "dit"], ["", "T", "ools"], ["", "G", "roup"], ["", "V", "iews"],
  ["", "C", "reate"], ["", "M", "odifiers"], ["", "A", "nimation"], ["Graph E", "d", "itors"],
  ["", "R", "endering"], ["Civil View", "", ""], ["C", "u", "stomize"], ["", "S", "cripting"],
  ["Interactive", "", ""], ["Content", "", ""], ["", "H", "elp"], ["Project Manager v.3", "", ""],
  ["Arnold", "", ""], ["Phoenix FD", "", ""],
];

/* ---------- toolbars ---------- */

const Toolbar = styled.div`
  flex: none;
  height: 31px;
  display: flex;
  align-items: center;
  overflow: hidden;
`;
const Gap = styled.div<{ $w: number }>`
  flex: none;
  width: ${(p) => p.$w}px;
`;
const TextTool = styled.button<{ $w: number }>`
  flex: none;
  width: ${(p) => p.$w}px;
  height: 27px;
  font: 11px ${UI};
`;
const LayerCombo = styled.div`
  position: relative;
  flex: none;
  display: flex;
  align-items: center;
  gap: 4px;
  width: 193px;
  height: 22px;
  margin-right: 1px;
  padding: 0 0 0 2px;
  background: #5d5d5d;
  &::after {
    content: "";
    position: absolute;
    right: 6px;
    top: 9px;
    border: 3px solid transparent;
    border-top: 5px solid #dcdcdc;
    border-bottom: 0;
    pointer-events: none;
  }
`;
const Dash = styled.span`
  width: 11px;
  height: 2px;
  background: #9a9a9a;
`;
const Swatch = styled.span`
  width: 9px;
  height: 9px;
  background: #0c3a94;
  border: 1px solid #16213a;
`;
const LayerSelect = styled(Select)`
  font: 11px "Open Sans", sans-serif;
  padding: 0;
  width: 120px;
`;

const tools = (list: string) =>
  list.split(" ").map((item, i) => {
    if (item === "|") return <Sep key={i} />;
    if (item === "||") return <Sep key={i} $w={7} />;
    const name = item.replace(/[!*#~]/g, "");
    return (
      <ToolButton
        key={i}
        $on={item.startsWith("!")}
        $framed={item.startsWith("#")}
        $dark={item.startsWith("~")}
        $fly={item.endsWith("*")}
        aria-label={name}
      >
        <Icon n={name} />
      </ToolButton>
    );
  });

/* ---------- body ---------- */

const Body = styled.div`
  flex: 1;
  min-height: 0;
  display: flex;
`;
const SideTools = styled.aside`
  flex: none;
  width: 33px;
  overflow: hidden;
  display: flex;
  flex-direction: column;
  padding-top: 4px;
  ${HGrip} { margin: 0 5px 0 3px; }
`;
const SideRule = styled.div`
  flex: none;
  height: 8px;
  margin: 0 2px 0 4px;
  background: linear-gradient(#1a1a1a, #1a1a1a) center / 100% 2px no-repeat;
`;
const sideIcons =
  "potBlue* cloud vfb uiList uiGrid - lamp - movie1 dome movieRed - lRect lDome lSphere lMesh lCone sun disc - dots balls pyramid furball grass hair ox - glass* convert* redDash".split(" ");

const Main = styled.main`
  flex: 1;
  min-width: 0;
  display: flex;
  flex-direction: column;
`;
const Ribbon = styled.section`
  flex: none;
  height: 43px;
  display: flex;
  border-top: 1px solid #5f5f5f;
`;
const RibbonTabs = styled.div`
  flex: 1;
  height: 19px;
  background: #525252;
  border-bottom: 1px solid #262626;
  display: flex;
`;
const RibbonTab = styled.button<{ $active?: boolean; $w: number }>`
  width: ${(p) => p.$w}px;
  font: 12px Lato, sans-serif;
  color: ${(p) => (p.$active ? "#e6e6e6" : "#a9a9a9")};
  &:first-child { padding-left: 12px; }
  ${(p) => p.$active && css`
    background: linear-gradient(#7a7a7a, #5e5e5e);
    border: 1px solid #333;
    border-bottom: 0;
  `}
`;
const RibbonMode = styled.button`
  display: flex;
  align-items: center;
  margin-left: 7px;
`;
const Middle = styled.div`
  flex: 1;
  min-height: 0;
  display: flex;
`;
const LayoutStrip = styled.div`
  flex: none;
  width: 36px;
  margin-right: 4px;
  display: flex;
  flex-direction: column;
  padding: 2px 0 3px;
  ${HGrip} { margin: 0 3px 3px 1px; }
`;
const StripWell = styled.div`
  flex: 1;
  background: linear-gradient(90deg, #2d2f30, #2b2b2b 70%, #3a3232);
  display: flex;
  flex-direction: column;
  justify-content: flex-end;
  align-items: center;
`;
const StripArrow = styled.button`
  width: 19px;
  height: 18px;
  margin-bottom: 10px;
  border-radius: 2px;
  background: #4d4d4d;
  display: grid;
  place-items: center;
`;
const LayoutThumb = styled.button`
  width: 34px;
  height: 42px;
  align-self: flex-end;
  padding: 7px 2px 9px 3px;
  border-radius: 3px 0 0 0;
  background: linear-gradient(#46607f, #3f7fd6);
  &::after {
    content: "";
    display: block;
    height: 100%;
    border: 2px solid #2d4a74;
    background: linear-gradient(#5d6270, #505a6a);
  }
`;

const Viewport = styled.section`
  position: relative;
  flex: 1;
  min-width: 0;
  margin-bottom: 2px;
  border: 2px solid #6f6122;
  background: #383838;
  overflow: hidden;
`;
const SceneSvg = styled.svg`
  display: block;
  width: 100%;
  height: 100%;
`;
const ViewLabel = styled.div`
  position: absolute;
  left: 3px;
  top: 4px;
  font: 11px/16px ${UI};
  color: #cfcfcf;
  white-space: pre;
`;
const Stats = styled.table`
  position: absolute;
  left: 12px;
  top: 33px;
  border-collapse: collapse;
  font-size: 11px;
  color: #dccb2e;
  td, th { padding: 0; height: 15px; line-height: 15px; font-weight: 400; text-align: left; }
  th:first-child { width: 38px; }
`;
const Compass = styled.svg`
  position: absolute;
  right: 16px;
  top: 12px;
  width: 72px;
  height: 78px;
`;
const Tripod = styled.svg`
  position: absolute;
  left: 16px;
  bottom: 15px;
  width: 44px;
  height: 48px;
`;

/* ---------- scene ---------- */

const grain = ["#4c4c4c", "#5d5d5d", "#4f4f4f", "#555555", "#494949", "#5a5a5a", "#4d4d4d", "#5f5f5f", "#515151"];
const weave = (x: number, y: number, upright: boolean) =>
  grain.map((c, i) => {
    const a = (i * 7) % 5;
    const b = 19 - ((i * 5) % 4);
    const o = i * 2 + 1;
    const d = upright ? `M${x + o} ${y + a}V${y + b}` : `M${x + a} ${y + o}H${x + b}`;
    return <path key={`${x}-${y}-${i}`} d={d} stroke={c} strokeWidth="1.200" />;
  });

const curtainHem = Array.from({ length: 24 }, (_, i) => {
  const x = 640 - i * 10.5;
  const y = 251 + i * 0.8;
  return `L${x} ${y - 2} L${x - 5} ${y + (i % 3 === 0 ? 6 : 2)}`;
}).join(" ");
const folds = Array.from({ length: 26 }, (_, i) => i);
const deskX = [719, 779, 840, 901, 961, 1021];

const plainChair = (x: number, up: boolean) => (
  <g key={`${x}${up}`}>
    {up ? (
      <>
        <path d={`M${x - 13} 296v-12c1-20 24-20 25 0v12z`} fill="#0a0a0a" />
        <path d={`M${x - 10} 297v-11c0-9 21-9 21 0v11z`} fill="#8c8c8c" />
        <path d={`M${x - 13} 296v-10M${x + 14} 296v-8`} stroke="#111" strokeWidth="2" />
      </>
    ) : (
      <>
        <path d={`M${x - 12} 341v28M${x + 12} 341v28M${x - 12} 362h24`} stroke="#111" strokeWidth="1.500" fill="none" />
        <path d={`M${x - 11} 341h23v13c-1 16-22 16-23 0z`} fill="#777" />
        <path d={`M${x - 9} 341h19v10c-1 12-18 12-19 0z`} fill="#959595" />
      </>
    )}
  </g>
);

const workChair = (x: number, top: boolean) => (
  <g key={`${x}${top}`} transform={top ? undefined : "matrix(1 0 0 -1 0 1026)"}>
    <rect x={x - 12} y="464" width="27" height="20" fill="#333333" />
    <path d={`M${x - 13} 466v14M${x + 15} 466v14`} stroke="#0c0c0c" strokeWidth="2.500" />
    <path d={`M${x - 12} 463c0-6 4-7 8-7h10c4 0 8 1 8 7z`} fill={top ? "#181818" : "#3a3a3a"} />
    <path d={`M${x - 12} 459c2-5 5-5 8-5h10c4 0 6 1 8 5`} fill="none" stroke={top ? "#8c8c8c" : "#f0f0ea"} strokeWidth="1.800" />
    <path d={`M${x + 13} 466v10`} stroke="#ccc" strokeWidth="1" />
    <path d={`M${x - 19} 470h6`} stroke="#111" strokeWidth="1" />
    <circle cx={x - 18} cy="470" r="1.500" fill="#111" />
  </g>
);

const Scene = () => (
  <SceneSvg viewBox="75 180 1280 672" preserveAspectRatio="xMidYMid slice" role="img" aria-label="Office floor, top view">
    <defs>
      <pattern id="carpet" width="38" height="38" patternUnits="userSpaceOnUse" x="614" y="628">
        <rect width="38" height="38" fill="#555555" />
        {weave(0, 0, false)}
        {weave(19, 0, true)}
        {weave(0, 19, true)}
        {weave(19, 19, false)}
      </pattern>
      <pattern id="wood" width="90" height="36" patternUnits="userSpaceOnUse" x="657" y="254">
        <rect width="90" height="36" fill="#987d69" />
        <path d="M0 0h34v9H0zM50 9h40v9H50zM20 18h36v9H20zM66 27h24v9H66z" fill="#917663" />
        <path d="M34 0h30v9H34zM0 9h22v9H0zM56 18h30v9H56zM10 27h30v9H10z" fill="#9f836e" />
      </pattern>
      <linearGradient id="desk" x1="0" x2="1">
        <stop offset="0" stopColor="#8a7361" /><stop offset=".5" stopColor="#957c69" /><stop offset="1" stopColor="#8b7462" />
      </linearGradient>
      <linearGradient id="fold" x1="0" x2="1">
        <stop offset="0" stopColor="#3e3e3e" /><stop offset=".7" stopColor="#343434" /><stop offset="1" stopColor="#0c0c0c" />
      </linearGradient>
      <clipPath id="leftCurtain"><path d={`M350 230L640 208V252 ${curtainHem} L388 271z`} /></clipPath>
    </defs>

    <path d="M384 262h573v-32h166v622H339V394h45z" fill="url(#carpet)" />

    {/* curved facade, left */}
    <path d="M319 216L384 272V387L400 395 339 394V371L319 368z" fill="#161616" />
    <path d="M328 211Q470 187 640 184v10Q470 198 330 217z" fill="#4d4d4d" />
    <path d="M318 217Q470 195 640 192v56L388 268z" fill="#000" />
    <path d="M346 222Q400 213 436 209l12 10q-50 4-94 10zM450 209q40-4 78-6l9 9q-40 4-78 7zM540 203q40-4 68-4l5 8q-40 2-66 5zM618 199h22v7h-20z" fill="#404040" />
    <path d="M440 203l16 17M531 196l10 18M609 192l5 15" stroke="#000" strokeWidth="5" />
    <path d={`M350 230L640 208V252 ${curtainHem} L388 271z`} fill="#050505" />
    <g clipPath="url(#leftCurtain)">
      {folds.map((i) => (
        <path key={i} d={`M${350 + i * 12} ${231 - i * 0.8}l${44 - i} ${50 - i * 0.3}`} stroke={i % 3 === 0 ? "#666" : "#262626"} strokeWidth=".9" />
      ))}
    </g>
    <path d="M319 368l20 7v19z" fill="#000" />
    <path d="M339 375v19h98l46 20h-84l-60-20z" fill="#000" />
    <path d="M437 369h58l9 6v18h-21z" fill="#040404" />
    <path d="M437 369l46 23v22l-46-20z" fill="#1b1b1b" />

    {/* lounge */}
    <ellipse cx="510" cy="278" rx="11" ry="11" fill="#0b0b0b" />
    <ellipse cx="503" cy="327" rx="12" ry="12" fill="#0c0c0c" />
    <path d="M499 320c10-2 15 4 14 12-5 6-13 8-15 2 4-4 4-8 1-14z" fill="#6f6f6f" />
    <path d="M515 328l6 1M508 338l5 6" stroke="#111" strokeWidth="1.500" />
    <ellipse cx="576" cy="340" rx="17" ry="17" fill="#050505" />
    <circle cx="570" cy="334" r="3" fill="none" stroke="#ccc" strokeWidth="1.500" />
    <path d="M523 260h114v47H530l-7-6z" fill="#231d1c" />
    <path d="M523 260h8v44l-8-4zM531 276h47v28h-47zM579 276h45v28h-45zM630 260h6v44h-6z" fill="#6a5f5e" />
    <path d="M533 261h22v14h-20zM599 260h24v18h-23z" fill="#554c4a" />
    <path d="M556 262l26-1-6 10-16 2z" fill="#5f492f" />
    <path d="M551 268l19 3 1 9-8 5-11-6z" fill="#6a6160" stroke="#1d1817" />
    <path d="M593 266l3-3 11 18-8 4-6-9z" fill="#b9b6b0" />
    <path d="M607 281l-3 8-5-4z" fill="#0d0b0b" />
    <path d="M622 280l8-4v24l-8-3z" fill="#7b5f40" />
    <path d="M540 287h30M586 287h28" stroke="#3a3130" strokeWidth="2" strokeDasharray="2 10" />

    {/* meeting room */}
    <path d="M642 200Q790 184 957 212L949 383H642z" fill="#000" />
    <path d="M657 253Q770 245 912 265V370H657z" fill="url(#wood)" />
    <path d="M646 204l11 49v117h-11z" fill="#2a231f" />
    <path d="M653 255v98" stroke="#000" strokeWidth="1.500" />
    <path d="M642 203h4v168h-4zM949 216h8v114h33v40h-41z" fill="#9a806b" />
    <path d="M640 192h2v182h-2z" fill="#dedede" />
    <path d="M640 191Q790 177 956 203L954 216Q790 188.500 644 203z" fill="#d6d6d6" />
    <path d="M949 370h41l-20 13h-34z" fill="#000" />
    <path d="M651 371h276v7H655z" fill="#8d7460" />
    <path d="M640 370l16 10v6h-16z" fill="#111" />
    <path d="M655 237c9-2 20 8 24 21l-4 9-8 2c-6-7-11-20-12-32z" fill="#5e6c53" />
    <path d="M690 254l13-1 10 3-6 9-12 4-6-5z" fill="#66745a" />
    <path d="M678 268c8 0 15 8 16 19-3 3-12 3-16 1-4-7-5-14 0-20z" fill="#5f6d54" />
    <path d="M667 272l8 1 3 8-6-1z" fill="#6a7760" />
    <path d="M684 251l9-2 1 14-8 5-4-7z" fill="#1d221b" />
    <path d="M672 266l8-2 1 6-6 3z" fill="#a9aaa2" />
    <path d="M658 241q12 10 16 24M694 263l15-6M684 272q6 8 6 16" stroke="#8b987a" strokeWidth="1" fill="none" />
    {[742, 779, 816].map((x) => plainChair(x, true))}
    {[742, 779, 816].map((x) => plainChair(x, false))}
    <path d="M828 294l4-7M829 350l3-8" stroke="#111" strokeWidth="2" />
    <rect x="720" y="296" width="120" height="45" fill="#bcbcbc" />
    <path d="M514 380h126v5H514zM655 380h282v5H655zM937 383h40v2h-40z" fill="#dcdcdc" />
    <path d="M668 387h235v9H668z" fill="#957b67" />
    <path d="M538 396h104v3H538zM668 396h235v4H668z" fill="#d6d6d6" />
    <path d="M903 385h112v16H903zM632 385h22l14 15h-24z" fill="#000" />
    <path d="M597 387l7 2v9l-6-3zM706 387v10" fill="none" stroke="#000" strokeWidth="2" />

    {/* left wall */}
    <path d="M494 375h10v211l10 0 16-6v47l-22 13-14 15z" fill="#242424" />
    <path d="M494 375h10v211h-10z" fill="#303030" />
    <path d="M498 655l11-14v211h-11z" fill="#3a3a3a" />
    <path d="M514 386h17l8 12v178l-25 10z" fill="#3a3a3a" />
    <path d="M538.500 398v178" stroke="#111" strokeWidth="1" />
    <path d="M504 375h9v211l-9-3z" fill="#cbcbcb" />
    <path d="M513 380v205" stroke="#8f8f8f" />
    <rect x="526" y="406" width="4" height="161" fill="#c9c9c9" />

    {/* cabinet */}
    <path d="M509 640l20-16h85l-16 16z" fill="#646464" />
    <path d="M598 640l16-16v10l-14 14v204h-2z" fill="#474747" />
    <rect x="509" y="641" width="88" height="211" fill="#c7c7c7" />
    <path d="M509 641.500h88.500V852" fill="none" stroke="#0d0d0d" strokeWidth="1.500" />
    <path d="M509 639.500h90V852" fill="none" stroke="#c9c9c9" strokeWidth="1" />
    <path d="M600 648l13-14v90l-13 20z" fill="#d4d4d4" />
    <path d="M600 673h10v58l-6 8v90l-4 22z" fill="#1e1e1e" />
    <path d="M601 682h4v50l-4 36z" fill="#555" />
    <path d="M608 732l6-8v78l-6 18z" fill="#392c24" />
    <path d="M603 734h5v76h-5z" fill="#97795f" />
    <path d="M610 812l3-13v14l-3 6z" fill="#e0e0e0" />

    {/* reception desk */}
    <path d="M613 818h213l12 34H600z" fill="#636363" />
    <path d="M627 818h100" stroke="#000" strokeWidth="2" />
    <path d="M627 820h100" stroke="#9d9d9d" strokeWidth="1" />
    <rect x="627" y="821" width="100" height="8" fill="#000" />
    <path d="M626 824l-6 22" stroke="#333" strokeWidth="2" />
    <path d="M727 831v13" stroke="#1c1c1c" strokeWidth="1.500" />

    {/* work desks */}
    {deskX.map((x) => workChair(x, true))}
    {deskX.map((x) => workChair(x, false))}
    <rect x="697" y="483" width="329" height="60" fill="url(#desk)" />
    <path d="M757 513v30" stroke="#3d2f27" strokeWidth="1" />
    <path d="M757 484v28M817 484v58M877 484v58M937 484v58" stroke="#816a59" strokeWidth=".8" />
    <path d="M697 513h330" stroke="#241d19" strokeWidth="2" />
    <path d="M740 509h127v3H740zM917 509h126v4H917z" fill="#565656" />
    {deskX.map((x) => (
      <g key={x}>
        <path d={`M${x - 6} 511l28-11M${x - 6} 515l28 10`} stroke="#111" strokeWidth="2.500" />
        <path d={`M${x + 5} 509l6-4M${x + 5} 516l6 3`} stroke="#414a4e" strokeWidth="4" />
        <path d={`M${x - 4} 498l16-4M${x - 4} 526l16 3`} stroke="#dedede" strokeWidth="5" strokeDasharray="2.500 1.500" />
        <path d={`M${x - 4} 500l16-5M${x - 4} 528l16 4`} stroke="#777" strokeWidth="1.500" strokeDasharray="1 2" />
      </g>
    ))}
    {[[608, 473], [608, 551], [686, 512], [763, 512], [840, 512], [917, 512], [995, 512]].map(([x, y]) => (
      <circle key={`${x}-${y}`} cx={x} cy={y} r="2.400" fill="#fff" />
    ))}

    {/* right facade */}
    <path d="M957 196L1084 212v18h-5v-15L957 202z" fill="#4c4c4c" />
    <path d="M957 203L1079 215v8L957 212z" fill="#000" />
    <path d="M1071 216h8v636h-8zM1018 256h12v74h-12zM1018 628h12v190l-12-10zM957 249l73 8v9l-73-7z" fill="#000" />
    <path d="M1030 257h4v60h-4zM1030 637h4v180h-4zM1065 316h6v137h-6zM1065 572h6v60h-6z" fill="#5f5f5f" />
    <path d="M1036 252v66M1036 640v176" stroke="#000" strokeWidth="2.500" />
    <path d="M993 214l-26 32" stroke="#000" strokeWidth="5" />
    <path d="M957 244l78 7M1030 257l41-35" stroke="#000" strokeWidth="2.500" />
    <path d="M1064 317l16-8M1064 393l16-7M1035 679l45 21M1035 748l45 29M1034 817l40 35M1062 617l18 4" stroke="#000" strokeWidth="4.500" />
    <path d="M1064 453h9v119h-9z" fill="#000" />
    <rect x="1084" y="453" width="4" height="119" fill="#a5a5a5" />

    {/* long curtain */}
    <path d="M1064 304l-48 26-4 14 3 12-3 12 4 15-2 20 2 16-3 14 5 24 2 32 10 6-3 28 3 22-10 14-6 12 2 14-3 16 4 10-3 16 32 16 19 4z" fill="url(#fold)" />
    <path d="M1065 474l-42 6 2 60-11 34-2 30 1 27 51 15z" fill="#040404" />
    {folds.slice(0, 15).map((i) => (
      <path key={i} d={`M${1015 + (i % 3)} ${340 + i * 9.5}q24 -4 49 -${20 - i}`} fill="none" stroke={i % 2 ? "#0c0c0c" : "#161616"} strokeWidth={i % 2 ? 2.5 : 3.5} />
    ))}
    {folds.slice(0, 14).map((i) => (
      <path key={i} d={`M${1017 + (i % 3)} ${345 + i * 9.5}q22 -4 40 -${16 - i}`} fill="none" stroke="#4c4c4c" strokeWidth=".9" />
    ))}
    {folds.slice(0, 11).map((i) => (
      <path key={i} d={`M${i < 5 ? 1026 : 1015} ${490 + i * 13}q24 ${i} 44 ${2 + i}`} fill="none" stroke="#242424" strokeWidth="1.200" />
    ))}
    <rect x="1020" y="509" width="23" height="4" fill="#4e4e4e" />

    <rect x="265.500" y="180.500" width="897" height="671" fill="none" stroke="#a8a41e" strokeWidth="1.500" />
  </SceneSvg>
);

/* ---------- command panel ---------- */

const Command = styled.aside`
  flex: none;
  width: 443px;
  padding: 2px 2px 0 4px;
  display: flex;
  flex-direction: column;
`;
const PanelTabs = styled.div`
  display: flex;
  gap: 1px;
  margin-top: 2px;
  border-bottom: 1px solid #333;
`;
const PanelTab = styled.button<{ $active?: boolean }>`
  width: 29px;
  height: 25px;
  display: grid;
  place-items: center;
  background: ${(p) => (p.$active ? "#444" : "#3c3c3c")};
  border-radius: 2px 2px 0 0;
`;
const PanelArea = styled.div`
  flex: 1;
  display: flex;
  margin-top: 3px;
`;
const PanelCol = styled.div`
  width: 221px;
  padding: 4px 1px 0 4px;
  display: flex;
  flex-direction: column;
`;
const NameRow = styled.div`
  display: flex;
  justify-content: space-between;
  align-items: center;
  margin-bottom: 9px;
`;
const NameInput = styled.input`
  width: 191px;
  height: 17px;
  border: 0;
  padding: 0 4px;
  background: #595959;
`;
const ColorButton = styled.button`
  width: 16px;
  height: 18px;
  background: #000;
`;
const StackBox = styled.div`
  height: 124px;
  margin-top: 4px;
  border: 2px solid #ececec;
`;
const StackTools = styled.div`
  display: flex;
  align-items: center;
  height: 22px;
  margin-top: 6px;
`;
const StackButton = styled.button<{ $on?: boolean }>`
  width: 22px;
  height: 22px;
  display: grid;
  place-items: center;
  border-radius: 2px;
  background: ${(p) => (p.$on ? "#4e658a" : "none")};
`;
const RollSplit = styled.div`
  display: flex;
  align-items: center;
  gap: 3px;
  margin: 14px 5px 4px 3px;
  &::before, &::after {
    content: "";
    flex: 1;
    height: 1px;
    background: #6c6c6c;
  }
  ${HGrip} { width: 14px; }
`;
const RollArea = styled.div`
  flex: 1;
  border-right: 5px solid #3c3c3c;
  border-left: 1px solid #4d4d4d;
`;
const OuterScroll = styled.div`
  width: 5px;
  margin-left: auto;
  margin-right: 2px;
  background: #3c3c3c;
`;

/* ---------- time line ---------- */

const TimeArea = styled.section`
  flex: none;
  display: flex;
  height: 59px;
  padding-bottom: 1px;
`;
const TimeCol = styled.div`
  flex: 1;
  display: flex;
  flex-direction: column;
`;
const SliderRow = styled.div`
  height: 23px;
  padding: 3px 0 0 1px;
  display: flex;
  align-items: flex-start;
  gap: 2px;
  border-bottom: 2px solid #1f1f1f;
`;
const SliderButton = styled.button<{ $w: number }>`
  width: ${(p) => p.$w}px;
  height: 16px;
  border-radius: 2px;
  background: #5a5a5a;
  color: #dcdcdc;
  line-height: 14px;
`;
const TrackRow = styled.div`
  flex: 1;
  display: flex;
`;
const CurveToggle = styled.button`
  width: 47px;
  display: grid;
  place-items: center;
  padding-right: 7px;
  padding-bottom: 12px;
`;
const Track = styled.div`
  position: relative;
  flex: 1;
  margin-right: 47px;
  padding: 0 6px;
  background: #2a2a2a;
  border-bottom: 10px solid #252525;
`;
const Ticks = styled.div`
  display: flex;
  justify-content: space-between;
`;
const Tick = styled.i<{ $major: boolean }>`
  width: 1px;
  height: ${(p) => (p.$major ? 24 : 12)}px;
  background: ${(p) => (p.$major ? "#555" : "#6b6b6b")};
`;
const Labels = styled.div`
  position: absolute;
  left: 6px;
  right: 6px;
  top: 10px;
  display: flex;
  justify-content: space-between;
`;
const FrameNo = styled.span`
  width: 1px;
  display: flex;
  justify-content: center;
  font: 11px/14px "Open Sans", sans-serif;
  color: #c4c4c4;
`;
const Playhead = styled.div`
  position: absolute;
  left: 3px;
  top: 1px;
  width: 7px;
  height: 23px;
  background: #85801f;
`;

/* ---------- status bar ---------- */

const StatusBar = styled.footer`
  flex: none;
  height: 52px;
  display: flex;
  padding: 0 9px 0 4px;
  border-bottom: 1px solid #1c1c1c;
`;
const Listener = styled.div`
  width: 93px;
  margin-top: 5px;
`;
const ListenerInput = styled.input<{ $pink?: boolean }>`
  display: block;
  width: 93px;
  height: ${(p) => (p.$pink ? 21 : 22)}px;
  border: 2px solid #f3f3f3;
  padding: 0 3px;
  background: ${(p) => (p.$pink ? "#d9c0c2" : "#ffffff")};
  color: #777;
  font: 11px "Liberation Mono", monospace;
`;
const StatusText = styled.div`
  flex: 1;
  margin: 2px 0 0 3px;
  padding: 6px 0 0 3px;
  border-left: 2px solid #1d1d1d;
  display: flex;
  flex-direction: column;
  gap: 7px;
  p { margin: 0; font: 11px/16px ${UI}; color: #e2e2e2; white-space: nowrap; }
`;
const Group = styled.div<{ $w: number; $gap?: number }>`
  flex: none;
  width: ${(p) => p.$w}px;
  margin-left: ${(p) => p.$gap ?? 0}px;
  padding-top: 6px;
  display: flex;
  flex-direction: column;
  gap: 4px;
`;
const Line = styled.div<{ $end?: boolean }>`
  height: 19px;
  display: flex;
  align-items: center;
  justify-content: ${(p) => (p.$end ? "flex-end" : "flex-start")};
`;
const Coord = styled.label`
  display: flex;
  align-items: center;
  justify-content: space-between;
  width: 67px;
  margin-left: 12px;
  font: 11px ${UI};
`;
const CoordInput = styled.input`
  width: 54px;
  height: 17px;
  border: 0;
  padding: 0 3px;
  background: #5a5a5a;
  color: #8b8b8b;
  font: 11px ${UI};
`;
const SmallText = styled.span`
  width: 63px;
  white-space: nowrap;
  font: 11px ${UI};
`;
const FrameField = styled.div`
  position: relative;
  &::before, &::after {
    content: "";
    position: absolute;
    right: 4px;
    border: 3px solid transparent;
  }
  &::before { top: 3px; border-bottom: 4px solid #dcdcdc; border-top: 0; }
  &::after { bottom: 3px; border-top: 4px solid #dcdcdc; border-bottom: 0; }
`;
const FrameInput = styled.input`
  display: block;
  width: 66px;
  height: 17px;
  border: 0;
  padding: 0 4px;
  background: #606060;
  font: 11px ${UI};
`;
const SetKeys = styled.button`
  flex: none;
  width: 39px;
  height: 39px;
  margin: 7px 0 0 8px;
  border-radius: 3px;
  background: #626262;
  display: grid;
  place-items: center;
`;
const KeyButton = styled.button<{ $w: number }>`
  flex: none;
  width: ${(p) => p.$w}px;
  height: 18px;
  border-radius: 2px;
  background: #5f5f5f;
  font: ${(p) => (p.$w < 50 ? 10 : 11)}px ${UI};
  white-space: nowrap;
`;

const Btn = ({ n, w = 22, s = 16, fly }: { n: string; w?: number; s?: number; fly?: boolean }) => (
  <ToolButton $w={w} $h={19} $fly={fly} aria-label={n}><Icon n={n} s={s} /></ToolButton>
);

export default function App() {
  const frames = Array.from({ length: 101 }, (_, i) => i);
  return (
    <Frame>
      <Global />
      <TitleBar>
        <Icon n="logo" s={13} />
        <TitleText>MrEgypt - Admin Office - 2020 - 0041 - MAX 2020.max - Autodesk 3ds Max 2020</TitleText>
        <WinButton aria-label="Minimize"><svg width="9" height="9"><path d="M0 5h8" stroke="#111" /></svg></WinButton>
        <WinButton aria-label="Restore"><svg width="9" height="9"><path d="M.5 2.500h6v6h-6zM2.500 2V.5h6v6H7" fill="none" stroke="#111" /></svg></WinButton>
        <WinButton aria-label="Close"><svg width="9" height="9"><path d="M0 0l9 9M9 0L0 9" stroke="#111" /></svg></WinButton>
      </TitleBar>
      <MenuBar>
        <MenuList>
          {menus.map(([a, u, b]) => <MenuItem key={a + u + b}>{a}{u && <u>{u}</u>}{b}</MenuItem>)}
        </MenuList>
        <Spacer />
        <SignIn><Icon n="user" s={15} />Sign In</SignIn>
        <WorkspaceLabel>Workspaces:</WorkspaceLabel>
        <Dropdown label="Hosny Fahmy" w={128} h={18} bg="#565656" />
        <Gap $w={3} />
      </MenuBar>

      <Toolbar>
        <Grip />
        {tools("undo redo | link unlink bind |")}
        <Dropdown label="All" w={63} h={20} tight />
        {tools("pick byName region* crossing | !move rotate scale* place*")}
        <Gap $w={2} />
        <Dropdown label="View" w={63} h={20} tight />
        <Gap $w={1} />
        {tools("pivot* | manip keyb | snap3* angle percent spinner | named")}
        <Dropdown label="Create Selection Se" w={111} h={20} tight />
        {tools("| mirror align* | sheet layerSheet | #ribbon curve schematic | material* | renderSetup frameWin ~renderProd* renderCloud gallery")}
        <Grip $before={31} />
        <Dropdown label="C:\Users\20122\Documents\3ds Max 2020" w={215} h={28} tight />
        <Gap $w={4} />
        {["projGear", "projFolder", "projTree", "projNet"].map((n) => (
          <ToolButton key={n} $w={28} aria-label={n}><Icon n={n} s={20} /></ToolButton>
        ))}
      </Toolbar>

      <Toolbar>
        <Grip />
        {tools("explorer")}
        <LayerCombo>
          <Dash /><Dash /><Icon n="potBlue" s={12} /><Swatch />
          <LayerSelect aria-label="Layer" defaultValue="0"><option value="0">0 (default)</option></LayerSelect>
        </LayerCombo>
        {tools("layerAdd layerIn pick layerPick")}
        <Grip />
        <ToolButton><Letter>X</Letter></ToolButton>
        <ToolButton><Letter>Y</Letter></ToolButton>
        <ToolButton $on><Letter>Z</Letter></ToolButton>
        <ToolButton $fly><Letter $small>XY</Letter></ToolButton>
        <ToolButton $on><Letter $small>X<em>?</em></Letter></ToolButton>
        <Grip $before={9} />
        {tools("bulb sunL camL trees list halfTree treePage donut sphereStack gridPlay winPlay camAdd winTeal potLine bulbGear")}
      </Toolbar>

      <Toolbar>
        <Grip />
        {tools("cubeFire cubeDrop ringFire ringDrop ringBubbles ringCube || gNet* gArrow* gChecker gBurst || play pause stop trash || fire fireX blast blastX smoke* cigar candle swamp || splash milk beer coffee honey* splat paint whirl falls ocean || help")}
        <Grip $before={5} $after={0} />
        <TextTool $w={71}>XSMP</TextTool>
        <Grip $before={0} $after={0} />
        <TextTool $w={70}>PolyDetail</TextTool>
        <Grip $before={0} $after={3} />
        <ToolButton aria-label="Cube"><Icon n="xsCube" /></ToolButton>
        <Grip $before={3} $after={3} />
        <ToolButton aria-label="Diamond"><Icon n="diamond" /></ToolButton>
        <Grip $before={2} $after={3} />
        <ToolButton aria-label="RB"><Icon n="rb" /></ToolButton>
        <Grip $before={3} $after={0} />
        <TextTool $w={71}>Copitor</TextTool>
        <Grip $before={0} $after={35} />
        <Grip $before={0} $after={3} />
        <ToolButton aria-label="Flow"><Icon n="flow" /></ToolButton>
      </Toolbar>

      <Body>
        <SideTools>
          <HGrip />
          {sideIcons.map((n, i) =>
            n === "-" ? <SideRule key={i} /> : (
              <ToolButton key={i} $w={32} $h={29} $fly={n.endsWith("*")} aria-label={n}><Icon n={n.replace("*", "")} s={21} /></ToolButton>
            ))}
        </SideTools>
        <Main>
          <Ribbon>
            <Grip $before={1} $after={2} />
            <RibbonTabs>
              <RibbonTab $w={83}>Modeling</RibbonTab>
              <RibbonTab $w={82} $active>Freeform</RibbonTab>
              <RibbonTab $w={90}>Selection</RibbonTab>
              <RibbonTab $w={98}>Object Paint</RibbonTab>
              <RibbonTab $w={90}>Populate</RibbonTab>
              <RibbonMode aria-label="Ribbon display">
                <svg width="24" height="10"><rect x="0" y="1" width="13" height="8" rx="2" fill="#e8e8e8" /><path d="M4 3h5l-2.500 4z" fill="#333" /><path d="M18 4h5l-2.500 4z" fill="#bbb" /></svg>
              </RibbonMode>
            </RibbonTabs>
          </Ribbon>

          <Middle>
            <LayoutStrip>
              <HGrip />
              <StripWell>
                <StripArrow aria-label="Expand"><svg width="6" height="9"><path d="M0 0l5 4.500L0 9z" fill="#e2e2e2" /></svg></StripArrow>
                <LayoutThumb aria-label="Layout" />
              </StripWell>
            </LayoutStrip>

            <Viewport>
              <Scene />
              <ViewLabel>[+] [Perspective ] [Standard ] [Default Shading ]  &lt;&lt;Disabled&gt;&gt;</ViewLabel>
              <Stats>
                <tbody>
                  <tr><th /><th>Total</th></tr>
                  <tr><td>Polys:</td><td>2,860,591</td></tr>
                  <tr><td>Verts:</td><td>2,407,085</td></tr>
                  <tr><td /><td /></tr>
                  <tr><td>FPS:</td><td>1.872</td></tr>
                </tbody>
              </Stats>
              <Compass viewBox="0 0 72 78">
                <ellipse cx="36" cy="39" rx="28" ry="29" fill="none" stroke="#858890" strokeWidth="6" />
                <ellipse cx="36" cy="39" rx="24" ry="25" fill="none" stroke="#4c4f58" strokeWidth="1.500" />
                <rect x="22" y="25" width="28" height="29" fill="#92938e" />
                <rect x="27" y="30" width="18" height="19" fill="#888b8e" />
                <g fontFamily="Liberation Sans, sans-serif" fontWeight="700" textAnchor="middle" fill="#b9b9b9" fontSize="12">
                  <text x="36" y="12">N</text><text x="36" y="74">S</text><text x="6" y="43">W</text><text x="66" y="43">E</text>
                  <text x="36" y="42" fontSize="7" fill="#55585c">TOP</text>
                </g>
              </Compass>
              <Tripod viewBox="0 0 44 48">
                <path d="M7 16v24" stroke="#1c7a1c" strokeWidth="1.500" /><path d="M7 40h24" stroke="#7e1313" strokeWidth="1.500" />
                <g fontFamily="Liberation Sans, sans-serif" fontSize="11" fontWeight="700"><text x="7" y="15" fill="#1c7a1c">y</text><text x="30" y="41" fill="#7e1313">x</text><text x="7" y="40" fill="#15157c">z</text></g>
              </Tripod>
            </Viewport>

            <Command>
              <HGrip />
              <PanelTabs>
                {["plus", "modify", "hierarchy", "motion", "display", "wrench"].map((n) => (
                  <PanelTab key={n} $active={n === "modify"} aria-label={n}><Icon n={n} s={16} /></PanelTab>
                ))}
              </PanelTabs>
              <PanelArea>
                <PanelCol>
                  <NameRow><NameInput aria-label="Object name" /><ColorButton aria-label="Object color" /></NameRow>
                  <Dropdown label="Modifier List" w={214} h={18} bg="#636363" />
                  <StackBox />
                  <StackTools>
                    <StackButton aria-label="Pin"><Icon n="pin" s={16} /></StackButton>
                    <Sep $w={12} />
                    <StackButton $on aria-label="Show end result"><Icon n="tube" s={16} /></StackButton>
                    <Sep $w={12} />
                    <StackButton aria-label="Make unique"><Icon n="unique" s={16} /></StackButton>
                    <StackButton aria-label="Remove"><Icon n="bin" s={15} /></StackButton>
                    <Sep $w={12} />
                    <StackButton aria-label="Configure"><Icon n="config" s={16} /></StackButton>
                  </StackTools>
                  <RollSplit><HGrip /></RollSplit>
                  <RollArea />
                </PanelCol>
                <OuterScroll />
              </PanelArea>
            </Command>
          </Middle>

          <TimeArea>
            <Grip $before={1} $after={2} />
            <TimeCol>
              <SliderRow>
                <SliderButton $w={13}>&lt;</SliderButton>
                <SliderButton $w={115}>0 / 100</SliderButton>
                <SliderButton $w={14}>&gt;</SliderButton>
              </SliderRow>
              <TrackRow>
                <CurveToggle aria-label="Mini curve editor"><Icon n="miniCurve" s={14} /></CurveToggle>
                <Track>
                  <Ticks>{frames.map((i) => <Tick key={i} $major={i % 5 === 0} />)}</Ticks>
                  <Playhead />
                  <Labels>{frames.filter((i) => i % 5 === 0).map((i) => <FrameNo key={i}>{i}</FrameNo>)}</Labels>
                </Track>
              </TrackRow>
            </TimeCol>
          </TimeArea>
        </Main>
      </Body>

      <StatusBar>
        <Listener>
          <ListenerInput $pink aria-label="Macro recorder" />
          <ListenerInput aria-label="Listener" defaultValue="MAXScript Mini" />
        </Listener>
        <StatusText><p>None Selected</p><p>Click and drag to select and move objects</p></StatusText>
        <Group $w={376}>
          <Line>
            <Btn n="isolate" w={20} /><Gap $w={5} /><Btn n="lock" w={20} /><Gap $w={4} /><Btn n="absMode" w={20} />
            <Gap $w={-3} />
            <Coord>X:<CoordInput defaultValue="9124.465" /></Coord>
            <Coord>Y:<CoordInput defaultValue="6734.879" /></Coord>
            <Coord>Z:<CoordInput defaultValue="0.0" /></Coord>
            <Spacer />
            <SmallText>Grid = 10.0</SmallText>
          </Line>
          <Line $end><Sep /><Btn n="tag" w={20} s={14} /><Gap $w={4} /><SmallText>Add Time Tag</SmallText></Line>
        </Group>
        <Group $w={116} $gap={39}>
          <Line>
            <Btn n="toStart" /><Sep /><Btn n="prev" w={18} s={14} /><Btn n="playBig" w={22} fly /><Btn n="next" w={20} s={14} /><Sep /><Btn n="toEnd" />
          </Line>
          <Line>
            <Btn n="keyMode" s={14} /><Sep $w={4} />
            <FrameField><FrameInput aria-label="Current frame" defaultValue="0" /></FrameField>
            <Sep $w={3} /><Btn n="clock" w={20} />
          </Line>
        </Group>
        <SetKeys aria-label="Set keys"><Icon n="bigKey" s={28} /></SetKeys>
        <Group $w={155} $gap={5}>
          <Line><KeyButton $w={43}>Auto Key</KeyButton><Gap $w={5} /><Dropdown label="Selected" w={107} h={18} bg="#5f5f5f" /></Line>
          <Line><KeyButton $w={43}>Set Key</KeyButton><Gap $w={5} /><Btn n="tangent" w={20} fly /><Gap $w={4} /><KeyButton $w={83}>Key Filters...</KeyButton></Line>
        </Group>
        <Group $w={88} $gap={8}>
          <Line><Btn n="zoom" /><Btn n="zoomAll" /><Btn n="extents" fly /><Btn n="extAll" fly /></Line>
          <Line><Btn n="fov" fly /><Btn n="hand" fly /><Btn n="orbit" fly /><Btn n="maxi" /></Line>
        </Group>
      </StatusBar>
    </Frame>
  );
}
